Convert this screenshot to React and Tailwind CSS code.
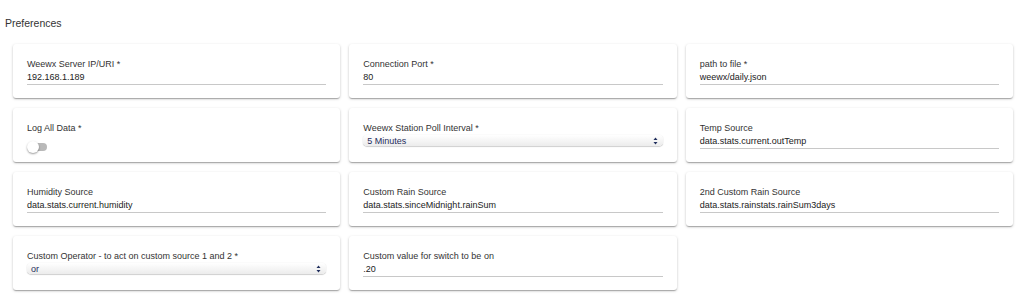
import React from "react";

/* --- helpers --- */
function Card({ children }) {
  return (
    <div className="h-[54px] rounded-[3px] bg-white px-[14px] pt-[15px] shadow-[0_1px_3px_rgba(0,0,0,0.2),0_1px_1px_rgba(0,0,0,0.14),0_2px_1px_-1px_rgba(0,0,0,0.12)]">
      {children}
    </div>
  );
}

function Label({ children }) {
  return <div className="text-[9px] leading-[11px] text-[#333]">{children}</div>;
}

function TextField({ label, value }) {
  return (
    <Card>
      <Label>{label}</Label>
      <div className="mt-[1px] border-b border-[#c8c8c8] text-[9px] leading-[13px] text-[#222]">
        {value}
      </div>
    </Card>
  );
}

function SelectField({ label, value }) {
  return (
    <Card>
      <Label>{label}</Label>
      <div className="mt-[1px] flex h-[11px] items-center justify-between rounded-[4px] bg-gradient-to-b from-white to-[#ececec] pl-[4px] pr-[5px] shadow-[0_0.5px_1px_rgba(0,0,0,0.35)]">
        <span className="text-[9px] leading-[10px] text-[#1f2d5c]">{value}</span>
        <svg width="5" height="8" viewBox="0 0 5 8" className="text-[#1f2d5c]">
          <path d="M2.5 0.5 L4.5 3 L0.5 3 Z" fill="currentColor" />
          <path d="M2.5 7.5 L4.5 5 L0.5 5 Z" fill="currentColor" />
        </svg>
      </div>
    </Card>
  );
}

function ToggleField({ label }) {
  return (
    <Card>
      <Label>{label}</Label>
      <div className="relative mt-[7px] h-[12px] w-[22px]">
        <div className="absolute left-[5px] top-[2px] h-[8px] w-[15px] rounded-full bg-[#b9b9b9]" />
        <div className="absolute left-0 top-0 h-[12px] w-[12px] rounded-full bg-white shadow-[0_1px_2px_rgba(0,0,0,0.4)]" />
      </div>
    </Card>
  );
}

export default function App() {
  return (
    <div className="min-h-[295px] w-[1024px] bg-white font-['Liberation_Sans',Arial,sans-serif]">
      <div className="px-[5px] pt-[16px] text-[10.5px] leading-[14px] text-[#333]">Preferences</div>

      <div className="mt-[14px] grid grid-cols-3 gap-x-[9px] gap-y-[10px] pl-[13px] pr-[11px]">
        <TextField label="Weewx Server IP/URI *" value="192.168.1.189" />
        <TextField label="Connection Port *" value="80" />
        <TextField label="path to file *" value="weewx/daily.json" />

        <ToggleField label="Log All Data *" />
        <SelectField label="Weewx Station Poll Interval *" value="5 Minutes" />
        <TextField label="Temp Source" value="data.stats.current.outTemp" />

        <TextField label="Humidity Source" value="data.stats.current.humidity" />
        <TextField label="Custom Rain Source" value="data.stats.sinceMidnight.rainSum" />
        <TextField label="2nd Custom Rain Source" value="data.stats.rainstats.rainSum3days" />

        <SelectField label="Custom Operator - to act on custom source 1 and 2 *" value="or" />
        <TextField label="Custom value for switch to be on" value=".20" />
      </div>
    </div>
  );
}
